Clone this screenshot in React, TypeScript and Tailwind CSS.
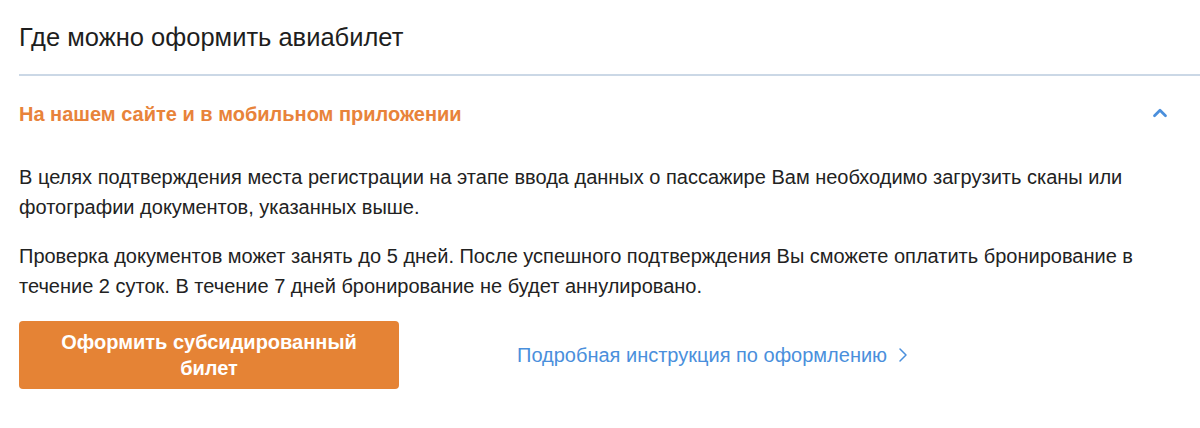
import { ChevronRight, ChevronUp } from "lucide-react";

export default function App() {
  return (
    <div className="min-h-screen bg-white font-['Liberation_Sans',Arial,sans-serif] text-[#222]">
      <div className="pl-[19px]">
        <h1 className="pt-[21px] pb-[21px] text-[25.5px] leading-[32px] text-[#1e1e1e]">
          Где можно оформить авиабилет
        </h1>
        <div className="h-[2px] bg-[#cbd8e6]" />
        <div className="pr-[19px]">
          <div className="flex items-center justify-between pt-[26px] pb-[24px]">
            <h2 className="text-[20px] font-bold leading-[24px] text-[#e8833a]">
              На нашем сайте и в мобильном приложении
            </h2>
            <ChevronUp className="mr-[10px] -mt-[3px] h-[22px] w-[22px] text-[#4a8fdc]" strokeWidth={3} />
          </div>
          <div className="text-[20px] leading-[30px] text-[#222]">
            <p className="mt-[12px]">
              В целях подтверждения места регистрации на этапе ввода данных о пассажире Вам необходимо загрузить сканы или фотографии документов, указанных выше.
            </p>
            <p className="mt-[19px]">
              Проверка документов может занять до 5 дней. После успешного подтверждения Вы сможете оплатить бронирование в течение 2 суток. В течение 7 дней бронирование не будет аннулировано.
            </p>
          </div>
          <div className="mt-[20px] flex items-center">
            <button className="flex h-[68px] w-[380px] items-center justify-center rounded-[4px] bg-[#e58335] px-[30px] text-center text-[20px] font-bold leading-[26px] text-white">
              Оформить субсидированный билет
            </button>
            <a className="ml-[118px] flex items-center gap-[4px] text-[20px] text-[#4a8fdc]" href="#">
              Подробная инструкция по оформлению
              <ChevronRight className="h-[24px] w-[24px]" strokeWidth={1.5} />
            </a>
          </div>
        </div>
      </div>
    </div>
  );
}
